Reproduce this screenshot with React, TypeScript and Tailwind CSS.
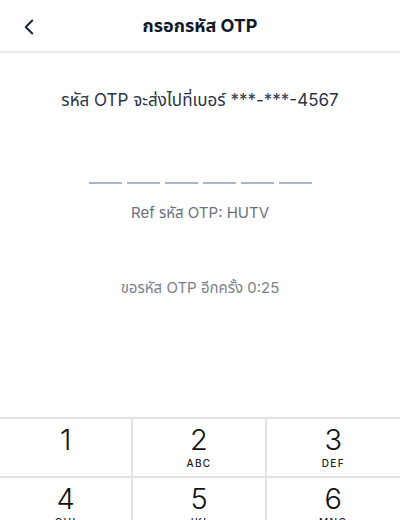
import { ChevronLeft } from "lucide-react";

const keys = [
  { n: "1", l: "" },
  { n: "2", l: "ABC" },
  { n: "3", l: "DEF" },
  { n: "4", l: "GHI" },
  { n: "5", l: "JKL" },
  { n: "6", l: "MNO" },
  { n: "7", l: "PQRS" },
  { n: "8", l: "TUV" },
  { n: "9", l: "WXYZ" },
  { n: "", l: "" },
  { n: "0", l: "" },
  { n: "", l: "" },
];

export default function App() {
  return (
    <div className="flex min-h-screen flex-col bg-white font-['Inter','Noto_Sans','Noto_Sans_Thai',sans-serif]">
      <div className="relative flex h-[53px] items-center justify-center border-b-2 border-[#e9eaf0]">
        <button className="absolute left-[16px] top-[14px] text-[#1b2236]">
          <ChevronLeft size={26} strokeWidth={1.8} />
        </button>
        <h1 className="text-[18px] font-bold text-[#111827]">กรอกรหัส OTP</h1>
      </div>

      <p className="mt-[35px] text-center text-[17px] leading-[24px] text-[#2b3346]">
        รหัส OTP จะส่งไปที่เบอร์ ***-***-4567
      </p>

      <div className="mt-[70px] flex justify-center gap-[5px]">
        {Array.from({ length: 6 }).map((_, i) => (
          <div key={i} className="h-[2px] w-[33px] bg-[#abb5cb]" />
        ))}
      </div>

      <p className="mt-[19px] text-center text-[15px] leading-[20px] text-[#6b7180]">
        Ref รหัส OTP: HUTV
      </p>

      <p className="mt-[55px] text-center text-[15px] leading-[20px] text-[#7a7f8c]">
        ขอรหัส OTP อีกครั้ง 0:25
      </p>

      <div className="mt-[119px] grid grid-cols-3 border-t-2 border-[#dfe3ea]">
        {keys.map((k, i) => (
          <div
            key={i}
            className={`flex h-[59px] flex-col items-center justify-start border-b-2 border-[#dfe3ea] pt-[5px] ${
              i % 3 !== 2 ? "border-r-2" : ""
            }`}
          >
            <span className="text-[29px] font-light leading-[32px] text-[#111]">{k.n}</span>
            {k.l && (
              <span className="mt-[1px] text-[10px] font-medium leading-[12px] tracking-[0.14em] text-[#222]">
                {k.l}
              </span>
            )}
          </div>
        ))}
      </div>
    </div>
  );
}
